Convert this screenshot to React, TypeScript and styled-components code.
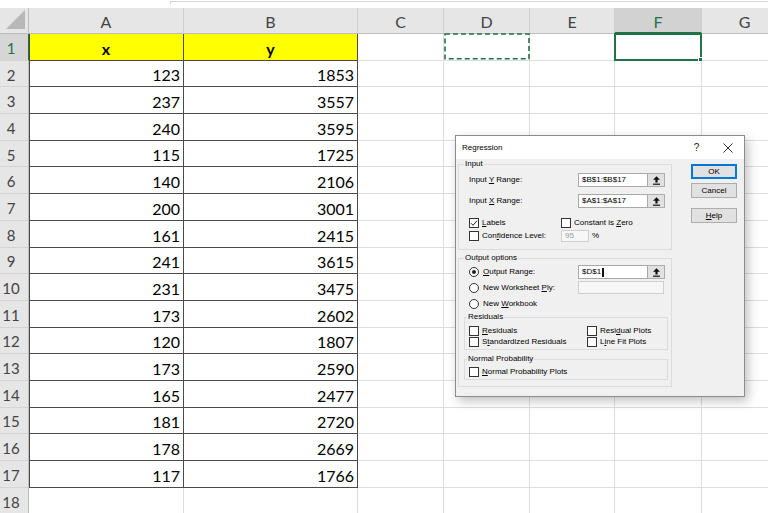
import React, { FC, ReactNode } from 'react'
import styled, { createGlobalStyle } from 'styled-components'

const GlobalStyle = createGlobalStyle`
  html, body {
    margin: 0;
    padding: 0;
    background: #fff;
    overflow: hidden;
  }
  body {
    font-family: Lato, 'Noto Sans', sans-serif;
  }
`

const Page = styled.div`
  position: relative;
  width: 768px;
  height: 513px;
  overflow: hidden;
`

const TopStrip = styled.div`
  display: flex;
  height: 8px;
`

const FormulaEdge = styled.div`
  flex: 1;
  margin-left: 170px;
  margin-top: 1px;
  border-top: 1px solid #d6d6d6;
  border-left: 1px solid #d6d6d6;
  height: 2px;
`

const Sheet = styled.div`
  display: grid;
  grid-template-columns: 29px 155px 174px 86px 86px 85px 87px 86px;
  grid-template-rows: 26px repeat(18, 26.7px);
`

const Corner = styled.div`
  box-sizing: border-box;
  display: flex;
  align-items: flex-end;
  justify-content: flex-end;
  padding: 0 3px 4px 0;
  background: #e6e6e6;
  border-right: 1px solid #bdbdbd;
  border-bottom: 1px solid #bdbdbd;
`

const ColHead = styled.div<{ $selected?: boolean }>`
  box-sizing: border-box;
  display: flex;
  align-items: center;
  justify-content: center;
  padding-top: 2px;
  background: ${p => (p.$selected ? '#d2d2d2' : '#e6e6e6')};
  color: ${p => (p.$selected ? '#217346' : '#444')};
  border-right: 1px solid #d0d0d0;
  border-bottom: ${p => (p.$selected ? '2px solid #217346' : '1px solid #bdbdbd')};
  font-size: 16px;
`

const RowHead = styled.div<{ $selected?: boolean }>`
  box-sizing: border-box;
  display: flex;
  align-items: center;
  justify-content: center;
  padding: 2px 6px 0 0;
  background: ${p => (p.$selected ? '#d6d6d6' : '#e6e6e6')};
  color: ${p => (p.$selected ? '#217346' : '#444')};
  border-right: 1px solid ${p => (p.$selected ? '#217346' : '#bdbdbd')};
  border-bottom: 1px solid #d4d4d4;
  font-size: 15px;
`

const Cell = styled.div<{ $data?: boolean; $edge?: boolean; $fill?: string; $head?: boolean }>`
  position: relative;
  box-sizing: border-box;
  display: flex;
  align-items: flex-end;
  justify-content: ${p => (p.$head ? 'center' : 'flex-end')};
  padding: 0 ${p => (p.$head ? 0 : 3)}px 3px 0;
  background: ${p => p.$fill ?? '#fff'};
  border-right: 1px solid ${p => (p.$data ? '#4a4a4a' : '#dedede')};
  border-bottom: 1px solid ${p => (p.$data ? '#4a4a4a' : '#dedede')};
  box-shadow: ${p => (p.$edge ? 'inset 1px 0 0 #4a4a4a' : 'none')};
  color: #000;
  font-size: 16px;
  line-height: 16px;
  font-weight: ${p => (p.$head ? 700 : 400)};
`

const Marquee = styled.svg`
  position: absolute;
  top: -1px;
  left: 0;
  width: calc(100% + 1px);
  height: calc(100% + 1px);
  overflow: visible;
`

const Selection = styled.div`
  position: absolute;
  top: -1px;
  left: -1px;
  right: -1px;
  bottom: -1px;
  border: 2px solid #217346;
`

const FillHandle = styled.div`
  position: absolute;
  right: -4px;
  bottom: -4px;
  width: 4px;
  height: 4px;
  background: #217346;
  border: 1px solid #fff;
`

/* ---------- dialog ---------- */

const Dialog = styled.div`
  position: absolute;
  left: 455px;
  top: 135px;
  width: 290px;
  height: 262px;
  box-sizing: border-box;
  display: flex;
  flex-direction: column;
  background: #f0f0f0;
  border: 1px solid #8c8c8c;
  box-shadow: 3px 4px 10px rgba(0, 0, 0, 0.25);
  font-family: 'Liberation Sans', Arial, sans-serif;
  font-size: 8px;
  line-height: 10px;
  color: #000;
`

const TitleBar = styled.div`
  display: flex;
  align-items: center;
  height: 23px;
  padding-left: 6px;
  background: #fff;
`

const TitleText = styled.div`
  flex: 1;
`

const TitleButton = styled.div`
  display: flex;
  align-items: center;
  justify-content: center;
  width: 31px;
  height: 23px;
  font-size: 10px;
  color: #222;
`

const DialogBody = styled.div`
  display: flex;
  padding-left: 2px;
`

const LeftCol = styled.div`
  display: flex;
  flex-direction: column;
  width: 214px;
`

const Group = styled.div<{ $top: number; $height: number; $inset?: number }>`
  position: relative;
  box-sizing: border-box;
  display: flex;
  flex-direction: column;
  margin-top: ${p => p.$top}px;
  margin-left: ${p => p.$inset ?? 0}px;
  width: ${p => 214 - 2 * (p.$inset ?? 0)}px;
  height: ${p => p.$height}px;
  border: 1px solid #dcdcdc;
`

const GroupLabel = styled.div<{ $left: number }>`
  position: absolute;
  top: -6px;
  left: ${p => p.$left}px;
  padding: 0 1px;
  background: #f0f0f0;
  line-height: 10px;
`

const Row = styled.div<{ $top: number; $height: number; $pad?: number }>`
  display: flex;
  align-items: center;
  margin-top: ${p => p.$top}px;
  height: ${p => p.$height}px;
  padding-left: ${p => p.$pad ?? 10}px;
`

const FieldLabel = styled.div`
  width: 109px;
`

const TextBox = styled.div<{ $width: number; $disabled?: boolean; $height?: number }>`
  box-sizing: border-box;
  display: flex;
  align-items: center;
  width: ${p => p.$width}px;
  height: ${p => p.$height ?? 14}px;
  padding-left: 3px;
  background: ${p => (p.$disabled ? '#f7f7f7' : '#fff')};
  border: 1px solid ${p => (p.$disabled ? '#cfcfcf' : '#a9a9a9')};
  color: ${p => (p.$disabled ? '#9a9a9a' : '#000')};
`

const Caret = styled.span`
  display: inline-block;
  width: 2px;
  height: 9px;
  margin-left: 1px;
  background: #111;
`

const PickButton = styled.div`
  box-sizing: border-box;
  display: flex;
  align-items: center;
  justify-content: center;
  width: 17px;
  height: 14px;
  background: #e1e1e1;
  border: 1px solid #adadad;
  border-left: none;
`

const Check = styled.div<{ $width?: number }>`
  display: flex;
  align-items: center;
  gap: 3px;
  width: ${p => (p.$width ? `${p.$width}px` : 'auto')};
`

const Box = styled.div`
  box-sizing: border-box;
  display: flex;
  align-items: center;
  justify-content: center;
  width: 10px;
  height: 10px;
  background: #fff;
  border: 1px solid #333;
`

const Radio = styled.div<{ $on?: boolean }>`
  box-sizing: border-box;
  display: flex;
  align-items: center;
  justify-content: center;
  width: 10px;
  height: 10px;
  margin-right: 1px;
  border-radius: 50%;
  background: #fff;
  border: 1px solid #333;
  &::after {
    content: '';
    display: ${p => (p.$on ? 'block' : 'none')};
    width: 4px;
    height: 4px;
    border-radius: 50%;
    background: #222;
  }
`

const Percent = styled.span`
  margin-left: 3px;
`

const RightCol = styled.div`
  display: flex;
  flex-direction: column;
  margin-left: 19px;
  padding-top: 5px;
`

const Button = styled.div<{ $top?: number; $default?: boolean }>`
  box-sizing: border-box;
  display: flex;
  align-items: center;
  justify-content: center;
  width: 46px;
  height: 15px;
  margin-top: ${p => p.$top ?? 0}px;
  background: #e1e1e1;
  border: ${p => (p.$default ? '2px solid #0078d7' : '1px solid #adadad')};
`

const U = styled.u`
  text-underline-offset: 1px;
`

const PickIcon: FC = () => (
  <svg width='7' height='9' viewBox='0 0 7 9'>
    <path d='M3.5 0.3 L7 3.8 H4.6 V6.6 H2.4 V3.8 H0 Z' fill='#111' />
    <rect x='0' y='7.6' width='7' height='1.2' fill='#111' />
  </svg>
)

const CheckBox: FC<{ checked?: boolean; width?: number; children: ReactNode }> = ({ checked, width, children }) => (
  <Check $width={width}>
    <Box>
      {checked && (
        <svg width='8' height='8' viewBox='0 0 8 8'>
          <path d='M1 4.2 L3.1 6.3 L7 1.6' fill='none' stroke='#222' strokeWidth='1' />
        </svg>
      )}
    </Box>
    <span>{children}</span>
  </Check>
)

const RangeField: FC<{ value: ReactNode }> = ({ value }) => (
  <>
    <TextBox $width={70}>{value}</TextBox>
    <PickButton>
      <PickIcon />
    </PickButton>
  </>
)

const RegressionDialog: FC = () => (
  <Dialog>
    <TitleBar>
      <TitleText>Regression</TitleText>
      <TitleButton>?</TitleButton>
      <TitleButton>
        <svg width='10' height='10' viewBox='0 0 10 10'>
          <path d='M0.5 0.5 L9.5 9.5 M9.5 0.5 L0.5 9.5' stroke='#333' strokeWidth='1' />
        </svg>
      </TitleButton>
      <span style={{ width: 1 }} />
    </TitleBar>
    <DialogBody>
      <LeftCol>
        <Group $top={5} $height={86}>
          <GroupLabel $left={5}>Input</GroupLabel>
          <Row $top={8} $height={14}>
            <FieldLabel>
              Input <U>Y</U> Range:
            </FieldLabel>
            <RangeField value='$B$1:$B$17' />
          </Row>
          <Row $top={7} $height={14}>
            <FieldLabel>
              Input <U>X</U> Range:
            </FieldLabel>
            <RangeField value='$A$1:$A$17' />
          </Row>
          <Row $top={8} $height={13}>
            <CheckBox checked width={92}>
              <U>L</U>abels
            </CheckBox>
            <CheckBox>
              Constant is <U>Z</U>ero
            </CheckBox>
          </Row>
          <Row $top={0} $height={13}>
            <CheckBox width={92}>
              Con<U>f</U>idence Level:
            </CheckBox>
            <TextBox $width={28} $height={12} $disabled>
              95
            </TextBox>
            <Percent>%</Percent>
          </Row>
        </Group>
        <Group $top={8} $height={129}>
          <GroupLabel $left={5}>Output options</GroupLabel>
          <Row $top={6} $height={14}>
            <Check $width={109}>
              <Radio $on />
              <span>
                <U>O</U>utput Range:
              </span>
            </Check>
            <RangeField
              value={
                <>
                  $D$1
                  <Caret />
                </>
              }
            />
          </Row>
          <Row $top={2} $height={13}>
            <Check $width={109}>
              <Radio />
              <span>
                New Worksheet <U>P</U>ly:
              </span>
            </Check>
            <TextBox $width={86} $height={13} $disabled />
          </Row>
          <Row $top={3} $height={14}>
            <Check>
              <Radio />
              <span>
                New <U>W</U>orkbook
              </span>
            </Check>
          </Row>
          <Group $top={6} $height={33} $inset={5}>
            <GroupLabel $left={2}>Residuals</GroupLabel>
            <Row $top={7} $height={11} $pad={4}>
              <CheckBox width={118}>
                <U>R</U>esiduals
              </CheckBox>
              <CheckBox>
                Resi<U>d</U>ual Plots
              </CheckBox>
            </Row>
            <Row $top={0} $height={11} $pad={4}>
              <CheckBox width={118}>
                S<U>t</U>andardized Residuals
              </CheckBox>
              <CheckBox>
                L<U>i</U>ne Fit Plots
              </CheckBox>
            </Row>
          </Group>
          <Group $top={9} $height={21} $inset={5}>
            <GroupLabel $left={2}>Normal Probability</GroupLabel>
            <Row $top={6} $height={11} $pad={4}>
              <CheckBox>
                <U>N</U>ormal Probability Plots
              </CheckBox>
            </Row>
          </Group>
        </Group>
      </LeftCol>
      <RightCol>
        <Button $default>OK</Button>
        <Button $top={4}>Cancel</Button>
        <Button $top={10}>
          <span>
            <U>H</U>elp
          </span>
        </Button>
      </RightCol>
    </DialogBody>
  </Dialog>
)

/* ---------- sheet ---------- */

const columns = ['A', 'B', 'C', 'D', 'E', 'F', 'G']

const data: [number, number][] = [
  [123, 1853],
  [237, 3557],
  [240, 3595],
  [115, 1725],
  [140, 2106],
  [200, 3001],
  [161, 2415],
  [241, 3615],
  [231, 3475],
  [173, 2602],
  [120, 1807],
  [173, 2590],
  [165, 2477],
  [181, 2720],
  [178, 2669],
  [117, 1766],
]

const renderCell = (row: number, col: number) => {
  const inTable = row <= 17 && col <= 1
  const header = row === 1 && col <= 1
  let content: ReactNode = null
  if (header) content = col === 0 ? 'x' : 'y'
  else if (inTable) content = data[row - 2][col]

  return (
    <Cell
      key={`${row}-${col}`}
      $data={inTable}
      $edge={inTable && col === 0}
      $head={header}
      $fill={header ? '#ffff00' : undefined}
    >
      {content}
      {row === 1 && col === 3 && (
        <Marquee>
          <rect
            x='1'
            y='1'
            style={{ width: 'calc(100% - 2px)', height: 'calc(100% - 2px)' }}
            fill='none'
            stroke='#217346'
            strokeWidth='1.6'
            strokeDasharray='5 3'
          />
        </Marquee>
      )}
      {row === 1 && col === 5 && (
        <Selection>
          <FillHandle />
        </Selection>
      )}
    </Cell>
  )
}

const App: FC = () => {
  const rows = Array.from({ length: 18 }, (_, i) => i + 1)
  return (
    <Page>
      <GlobalStyle />
      <TopStrip>
        <FormulaEdge />
      </TopStrip>
      <Sheet>
        <Corner>
          <svg width='19' height='19' viewBox='0 0 19 19'>
            <polygon points='19,0 19,19 0,19' fill='#b8b8b8' />
          </svg>
        </Corner>
        {columns.map(c => (
          <ColHead key={c} $selected={c === 'F'}>
            {c}
          </ColHead>
        ))}
        {rows.map(r => (
          <React.Fragment key={r}>
            <RowHead $selected={r === 1}>{r}</RowHead>
            {columns.map((_, ci) => renderCell(r, ci))}
          </React.Fragment>
        ))}
      </Sheet>
      <RegressionDialog />
    </Page>
  )
}

export default App
